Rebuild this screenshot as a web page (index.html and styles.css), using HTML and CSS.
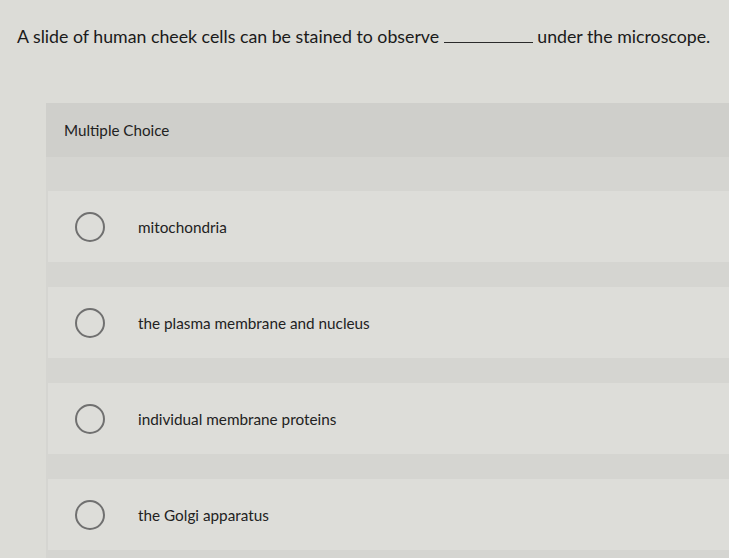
FILE: index.html
```html
<!DOCTYPE html>
<html>
<head>
<meta charset="utf-8">
<link rel="stylesheet" href="styles.css">
</head>
<body>
<div class="page">
  <p class="question">A slide of human cheek cells can be stained to observe <span class="blank"></span> under the microscope.</p>
  <div class="panel">
    <div class="panel-head">Multiple Choice</div>
    <div class="panel-body">
      <div class="option"><span class="radio"></span><span class="label">mitochondria</span></div>
      <div class="option"><span class="radio"></span><span class="label">the plasma membrane and nucleus</span></div>
      <div class="option"><span class="radio"></span><span class="label">individual membrane proteins</span></div>
      <div class="option"><span class="radio"></span><span class="label">the Golgi apparatus</span></div>
    </div>
  </div>
</div>
</body>
</html>
```

FILE: styles.css
```css
html, body {
  margin: 0;
  padding: 0;
  background: #dcdcd7;
  font-family: Lato, "Open Sans", "Liberation Sans", sans-serif;
  color: #1f1f1f;
}
.page {
  width: 729px;
  height: 558px;
  overflow: hidden;
}
.question {
  margin: 0;
  padding: 24px 0 0 17px;
  height: 103px;
  box-sizing: border-box;
  font-size: 17.75px;
  line-height: 24px;
  letter-spacing: 0;
  color: #1a1a1a;
}
.blank {
  display: inline-block;
  width: 89px;
  border-bottom: 1.5px solid #2a2a2a;
  vertical-align: baseline;
}
.panel {
  margin-left: 46px;
}
.panel-head {
  height: 54px;
  padding-left: 18px;
  display: flex;
  align-items: center;
  background: #cfcfcb;
  font-size: 15.2px;
  color: #222;
}
.panel-body {
  background: #d5d5d1;
  padding: 34px 0 12px 2px;
  display: flex;
  flex-direction: column;
  gap: 25px;
}
.option {
  height: 71px;
  background: #ddddd9;
  display: flex;
  align-items: center;
  padding-left: 27px;
}
.radio {
  width: 26px;
  height: 26px;
  border: 2px solid #707070;
  border-radius: 50%;
  flex: none;
}
.label {
  margin-left: 33px;
  font-size: 15.3px;
  color: #222;
}
```
